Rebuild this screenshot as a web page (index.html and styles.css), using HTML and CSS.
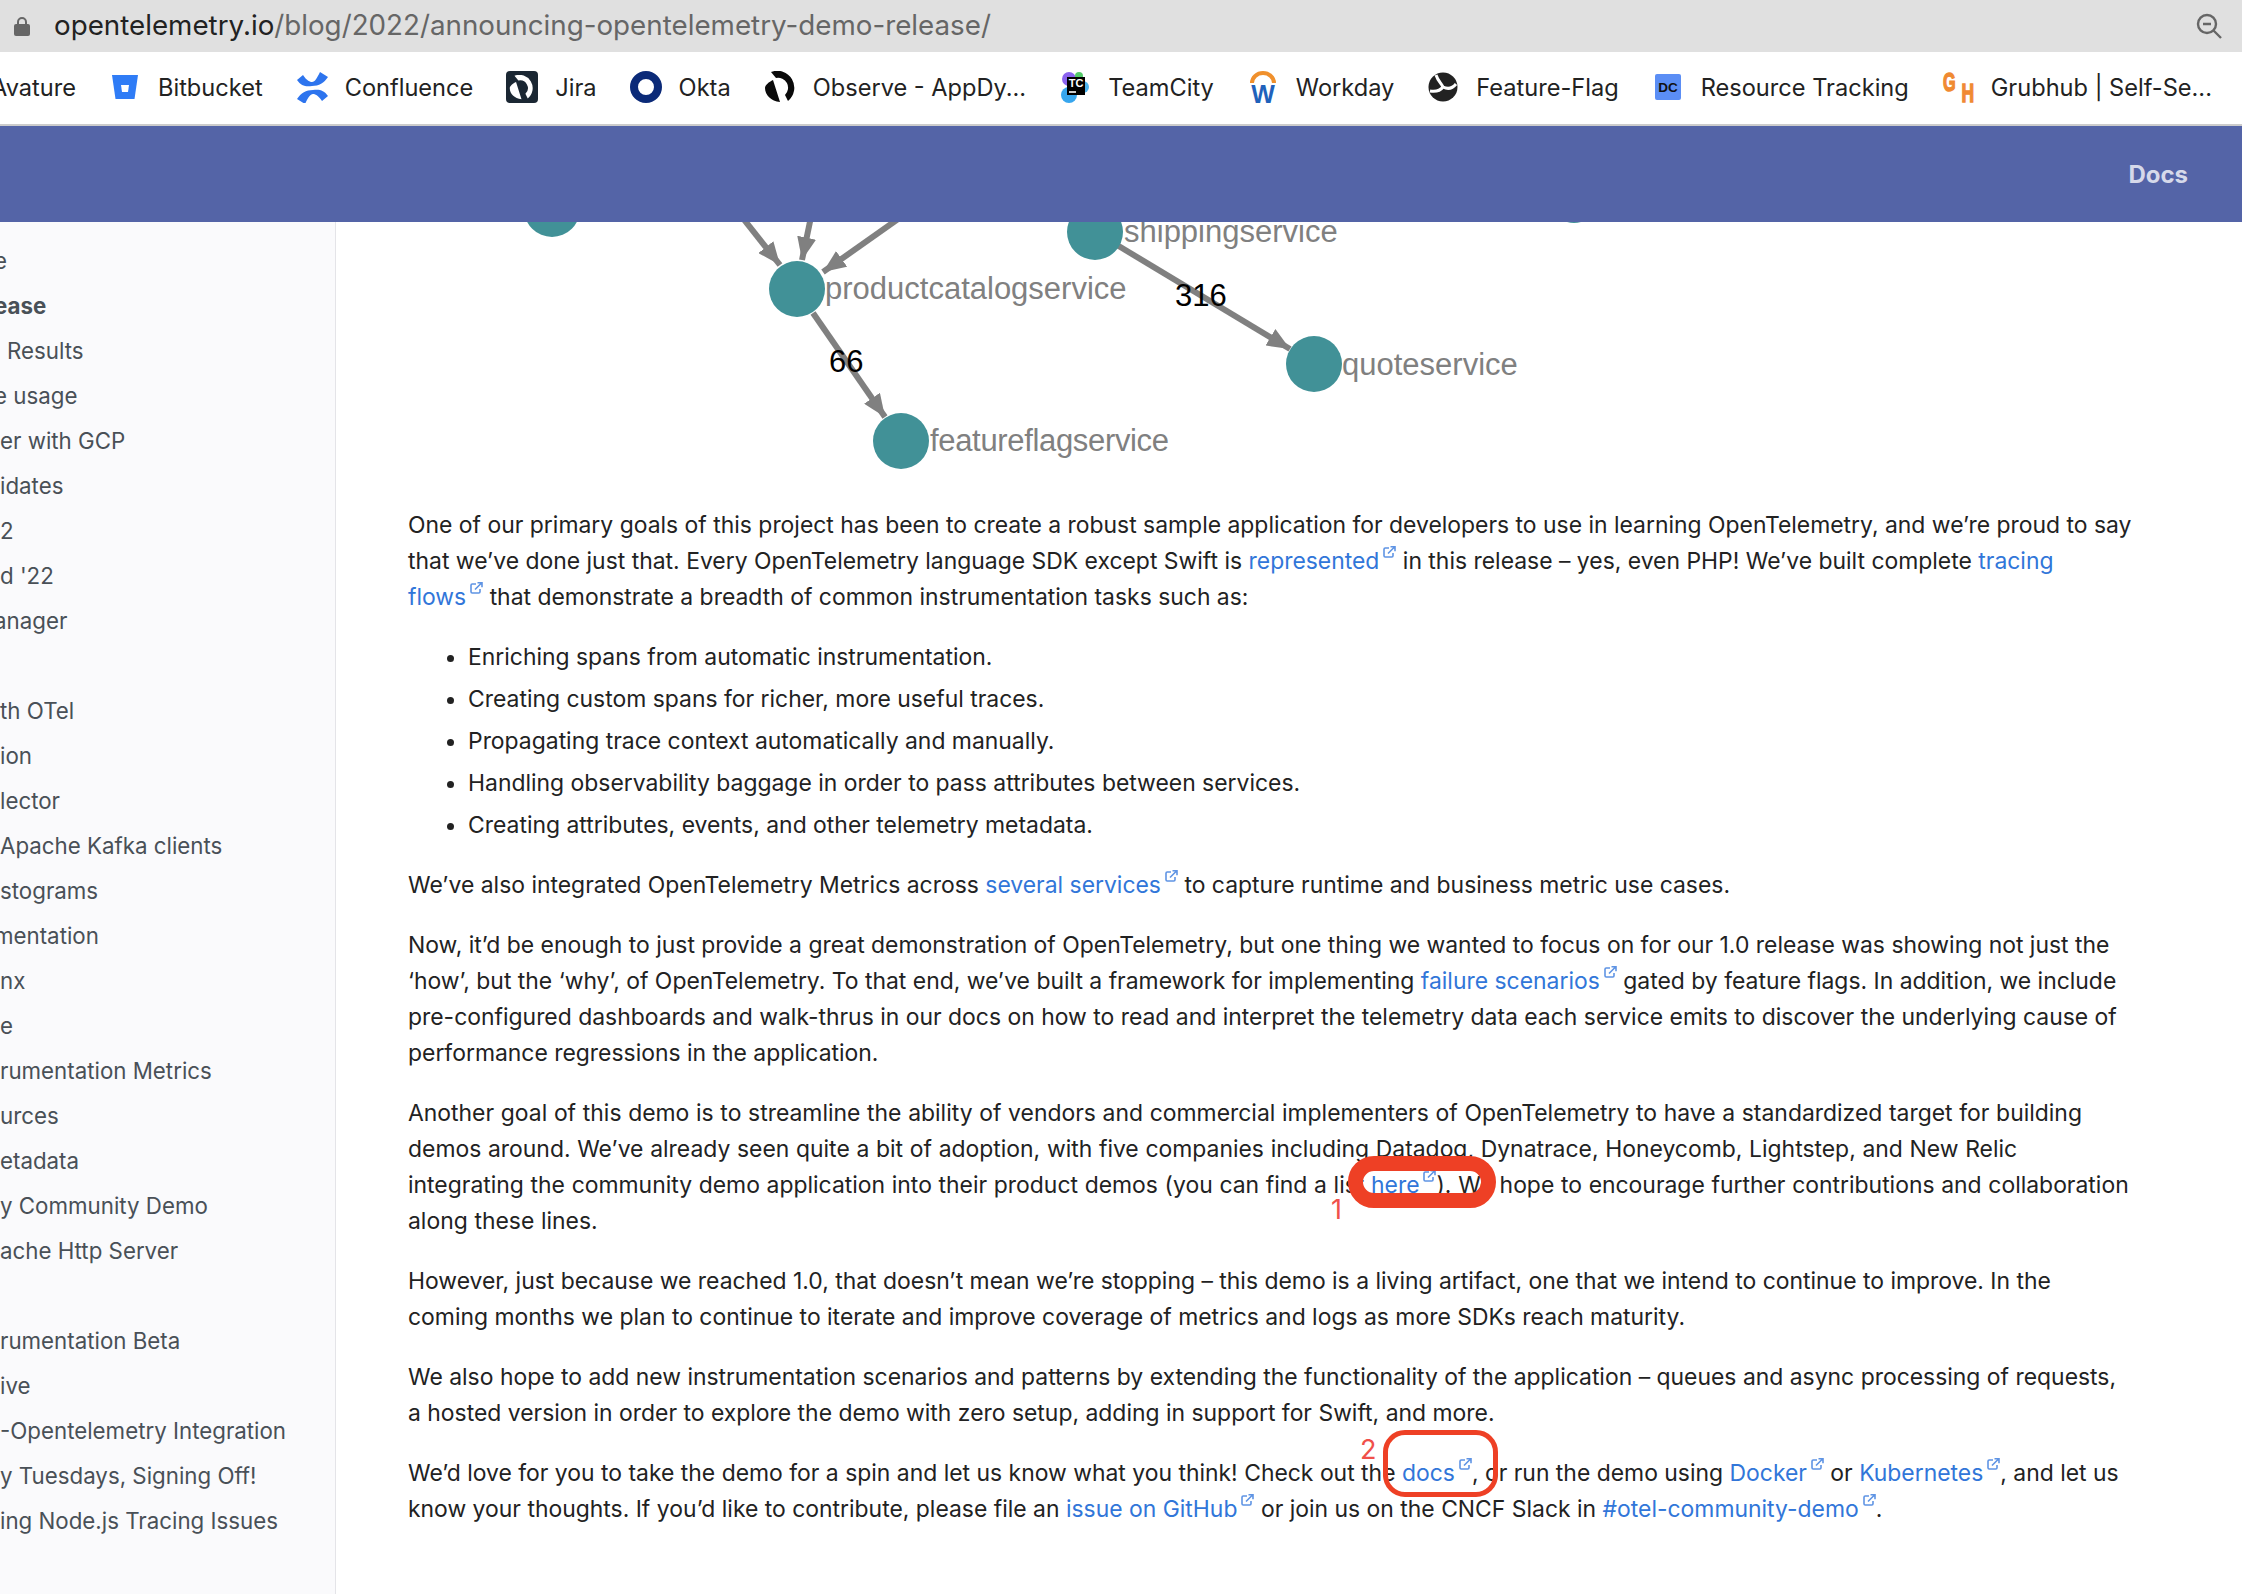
FILE: index.html
```html
<!DOCTYPE html>
<html lang="en">
<head>
  <meta charset="UTF-8" />
  <title>Announcing the OpenTelemetry Demo Release</title>
  <link rel="stylesheet" href="styles.css">
</head>
<body>
  <svg width="0" height="0" class="defs">
    <symbol id="ext" viewBox="0 0 13 12">
      <path d="M6 2H2.2A1.2 1.2 0 0 0 1 3.2v6.6A1.2 1.2 0 0 0 2.2 11h6.6A1.2 1.2 0 0 0 10 9.800V7M5 7.500 11.500 1M7.500 .8H12V5.300" fill="none" stroke="currentColor" stroke-width="1.600"/>
    </symbol>
    <symbol id="swirl" viewBox="0 0 32 32">
      <path d="M7 1A17 17 0 0 1 24 30L21 24A10 10 0 0 0 12 7zM9 9 16 31C7 30 1 24 1 17 1 14 5 11 9 9z"/>
    </symbol>
  </svg>

  <!-- Browser chrome -->
  <div class="url-bar">
    <svg class="lock" viewBox="0 0 16 20"><path d="M4 9V6a4 4 0 0 1 8 0v3" fill="none" stroke="#666" stroke-width="2"/><rect y="8" width="16" height="12" rx="2" fill="#666"/></svg>
    <span class="url"><b>opentelemetry.io</b>/blog/2022/announcing-opentelemetry-demo-release/</span>
    <svg class="zoom-icon" viewBox="0 0 26 26"><circle cx="11" cy="11" r="9" fill="none" stroke="#666" stroke-width="2.400"/><path d="M7 11h8M17.500 17.500 25 25" fill="none" stroke="#666" stroke-width="2.400"/></svg>
  </div>

  <div class="bookmarks">
    <a class="bm first">Avature</a>
    <a class="bm">
      <svg viewBox="-3 -4 32 32"><path d="M0 0h26l-3.500 24H3.500z" fill="#2f7cf6"/><path d="M9 10h8l-1 7h-6z" fill="#fff"/></svg>
      Bitbucket</a>
    <a class="bm">
      <svg viewBox="0 0 32 32"><path id="conf-band" d="M1 9 7 4C11 10 14 11 16 11 19 11 21 7 24 1l8 5C28 12 23 15 16 15 10 16 5 15 1 9z" fill="#2d74ee"/><use href="#conf-band" transform="rotate(180 16.500 17)"/></svg>
      Confluence</a>
    <a class="bm">
      <svg viewBox="0 0 32 32"><rect width="32" height="32" rx="4" fill="#1b2733"/><use href="#swirl" x="3" y="4" width="25" height="25" fill="#fff"/></svg>
      Jira</a>
    <a class="bm">
      <svg viewBox="0 0 32 32"><circle cx="16" cy="16" r="12" fill="none" stroke="#0b2a78" stroke-width="8"/></svg>
      Okta</a>
    <a class="bm">
      <svg viewBox="0 0 32 32"><use href="#swirl" width="32" height="32" fill="#0a0a0a"/></svg>
      Observe - AppDy...</a>
    <a class="bm">
      <svg viewBox="0 0 32 32"><circle cx="10" cy="8" r="7" fill="#8a63ee"/><circle cx="20" cy="5" r="4" fill="#54c96a"/><circle cx="10" cy="24" r="8" fill="#37a6ee"/><circle cx="24" cy="16" r="6" fill="#4db4ee"/><rect x="8" y="6" width="18" height="18" fill="#000"/><text x="17" y="16" class="tc">TC</text><path d="M10 21h7" stroke="#fff" stroke-width="1.600"/></svg>
      TeamCity</a>
    <a class="bm">
      <svg viewBox="-2 0 32 32"><path d="M3 12a11 10 0 0 1 22 0" fill="none" stroke="#f0902c" stroke-width="4"/><text x="14" y="32" class="wd">W</text></svg>
      Workday</a>
    <a class="bm">
      <svg viewBox="-1 -1 32 32"><circle cx="15" cy="15" r="14.500" fill="#222"/><path d="M15 15C13 11 10 9 8 3M15 15C12 19 8 20 2 19M15 15C19 17 24 17 28 12" fill="none" stroke="#fff" stroke-width="3"/></svg>
      Feature-Flag</a>
    <a class="bm">
      <svg viewBox="-3 -3 32 32"><rect width="26" height="26" rx="2" fill="#5b8ef5"/><text x="13" y="18" class="dc">DC</text></svg>
      Resource Tracking</a>
    <a class="bm">
      <svg viewBox="0 0 33 32"><text x="1" y="20" class="gh" textLength="13" lengthAdjust="spacingAndGlyphs">G</text><text x="20" y="31" class="gh" textLength="13" lengthAdjust="spacingAndGlyphs">H</text></svg>
      Grubhub | Self-Se...</a>
  </div>

  <header class="site-nav"><a>Docs</a></header>

  <div class="page">
    <!-- Sidebar, scrolled sideways in the capture -->
    <aside class="sidebar">
      <ul>
        <li class="cut">e</li>
        <li class="active cut">ease</li>
        <li class="step">Results</li>
        <li class="cut">e usage</li>
        <li>er with GCP</li>
        <li>idates</li>
        <li>2</li>
        <li>d '22</li>
        <li class="cut">anager</li>
        <li>&nbsp;</li>
        <li>th OTel</li>
        <li>ion</li>
        <li>lector</li>
        <li>Apache Kafka clients</li>
        <li>stograms</li>
        <li class="cut">mentation</li>
        <li>nx</li>
        <li>e</li>
        <li>rumentation Metrics</li>
        <li>urces</li>
        <li>etadata</li>
        <li>y Community Demo</li>
        <li>ache Http Server</li>
        <li>&nbsp;</li>
        <li>rumentation Beta</li>
        <li>ive</li>
        <li>-Opentelemetry Integration</li>
        <li>y Tuesdays, Signing Off!</li>
        <li>ing Node.js Tracing Issues</li>
      </ul>
    </aside>

    <main class="content">
      <!-- Service graph -->
      <svg class="graph" viewBox="335 222 1400 285" width="1400" height="285">
        <defs>
          <marker id="head" markerWidth="4" markerHeight="3.200" refX="3.800" refY="1.600" orient="auto">
            <path d="M0 0 3.800 1.600 0 3.200z" fill="#808080"/>
          </marker>
        </defs>
        <g class="edges">
          <path d="M737 212 779 265" marker-end="url(#head)"/>
          <path d="M811 212 801 260" marker-end="url(#head)"/>
          <path d="M907 212 822 272" marker-end="url(#head)"/>
          <path d="M1116 245 1289 349" marker-end="url(#head)"/>
          <path d="M812 313 884 417" marker-end="url(#head)"/>
        </g>
        <g class="nodes">
          <circle cx="551" cy="209" r="28"/>
          <circle cx="1573" cy="199" r="24"/>
          <circle cx="1094" cy="232" r="28"/>
          <circle cx="796" cy="289" r="28"/>
          <circle cx="1313" cy="364" r="28"/>
          <circle cx="900" cy="441" r="28"/>
        </g>
        <g class="labels">
          <text x="1123" y="242">shippingservice</text>
          <text x="824" y="299">productcatalogservice</text>
          <text x="1341" y="375">quoteservice</text>
          <text x="929" y="451" textLength="239">featureflagservice</text>
        </g>
        <g class="counts">
          <text x="1174" y="306">316</text>
          <text x="828" y="372">66</text>
        </g>
      </svg>

      <p>One of our primary goals of this project has been to create a robust sample application for developers to use in learning OpenTelemetry, and we’re proud to say that we’ve done just that. Every OpenTelemetry language SDK except Swift is <a>represented<svg class="ext"><use href="#ext"/></svg></a> in this release – yes, even PHP! We’ve built complete <a>tracing <span class="nb">flows<svg class="ext"><use href="#ext"/></svg></span></a> that demonstrate a breadth of common instrumentation tasks such as:</p>
      <ul class="tasks">
        <li>Enriching spans from automatic instrumentation.</li>
        <li>Creating custom spans for richer, more useful traces.</li>
        <li>Propagating trace context automatically and manually.</li>
        <li>Handling observability baggage in order to pass attributes between services.</li>
        <li>Creating attributes, events, and other telemetry metadata.</li>
      </ul>
      <p>We’ve also integrated OpenTelemetry Metrics across <a>several services<svg class="ext"><use href="#ext"/></svg></a> to capture runtime and business metric use cases.</p>
      <p>Now, it’d be enough to just provide a great demonstration of OpenTelemetry, but one thing we wanted to focus on for our 1.0 release was showing not just the ‘how’, but the ‘why’, of OpenTelemetry. To that end, we’ve built a framework for implementing <a>failure scenarios<svg class="ext"><use href="#ext"/></svg></a> gated by feature flags. In addition, we include pre-configured dashboards and walk-thrus in our docs on how to read and interpret the telemetry data each service emits to discover the underlying cause of performance regressions in the application.</p>
      <p class="loose">Another goal of this demo is to streamline the ability of vendors and commercial implementers of OpenTelemetry to have a standardized target for building demos around. We’ve already seen quite a bit of adoption, with five companies including Datadog, Dynatrace, Honeycomb, Lightstep, and New Relic integrating the community demo application into their product demos (you can find a list <a>here<svg class="ext"><use href="#ext"/></svg></a>). We hope to encourage further contributions and collaboration along these lines.</p>
      <p>However, just because we reached 1.0, that doesn’t mean we’re stopping – this demo is a living artifact, one that we intend to continue to improve. In the coming months we plan to continue to iterate and improve coverage of metrics and logs as more SDKs reach maturity.</p>
      <p>We also hope to add new instrumentation scenarios and patterns by extending the functionality of the application – queues and async processing of requests, a hosted version in order to explore the demo with zero setup, adding in support for Swift, and more.</p>
      <p>We’d love for you to take the demo for a spin and let us know what you think! Check out the <a>docs<svg class="ext"><use href="#ext"/></svg></a>, or run the demo using <a>Docker<svg class="ext"><use href="#ext"/></svg></a> or <a>Kubernetes<svg class="ext"><use href="#ext"/></svg></a>, and let us know your thoughts. If you’d like to contribute, please file an <a>issue on GitHub<svg class="ext"><use href="#ext"/></svg></a> or join us on the CNCF Slack in <a>#otel-community-demo<svg class="ext"><use href="#ext"/></svg></a>.</p>

      <!-- Red marks drawn over the screenshot -->
      <div class="mark mark-here"></div>
      <div class="mark mark-docs"></div>
      <span class="mark-num num-1">1</span>
      <span class="mark-num num-2">2</span>
    </main>
  </div>
</body>
</html>
```

FILE: styles.css
```css
* {
  box-sizing: border-box;
}

html, body {
  margin: 0;
  height: 1594px;
  overflow: hidden;
}

body {
  font-family: Inter, "Noto Sans", sans-serif;
  color: #222;
  background-color: white;
}

.defs {
  position: absolute;
}

/* Browser chrome */
.url-bar {
  height: 52px;
  display: flex;
  align-items: center;
  padding: 0 20px 0 14px;
  background-color: #e0e0e0;
}

.lock {
  width: 16px;
  height: 20px;
}

.url {
  margin: 0 0 3px 24px;
  font-size: 27.75px;
  color: #666;
  flex: 1;
}

.url b {
  font-weight: normal;
  color: #222;
}

.zoom-icon {
  width: 26px;
  height: 26px;
}

.bookmarks {
  height: 74px;
  display: flex;
  align-items: center;
  gap: 33px;
  padding-bottom: 2px;
  border-bottom: 2px solid #ccc;
  overflow: hidden;
  white-space: nowrap;
}

.bm {
  display: flex;
  align-items: center;
  gap: 17px;
  font-size: 23.6px;
  flex-shrink: 0;
}

.bm.first {
  margin-left: -9px;
}

.bm svg {
  width: 32px;
  height: 32px;
  flex-shrink: 0;
}

.dc, .tc, .wd {
  font-family: "Liberation Sans", sans-serif;
  font-weight: bold;
  text-anchor: middle;
}

.dc {
  font-size: 13.5px;
  fill: #111;
}

.tc {
  font-size: 11px;
  fill: #fff;
}

.wd {
  font-size: 25px;
  fill: #1f62bb;
}

.gh {
  font: bold 27px "Liberation Sans", sans-serif;
  fill: #f08a32;
  stroke: #f08a32;
  stroke-width: 1.5;
}

.site-nav {
  height: 96px;
  display: flex;
  align-items: center;
  justify-content: flex-end;
  padding: 0 54px 0 0;
  background-color: #5464a7;
}

.site-nav a {
  font-size: 24px;
  font-weight: bold;
  color: #d6d9ea;
}

/* Page */
.page {
  display: flex;
  height: 1372px;
}

.sidebar {
  width: 336px;
  flex-shrink: 0;
  padding-top: 16px;
  background-color: #fafafc;
  border-right: 1px solid #e4e4e8;
  overflow: hidden;
  white-space: nowrap;
}

.sidebar ul {
  margin: 0;
  padding: 0;
  list-style: none;
}

.sidebar li {
  height: 45px;
  line-height: 45px;
  font-size: 22.3px;
  color: #495057;
}

.sidebar .active {
  font-weight: bold;
}

.sidebar .step {
  padding-left: 7px;
}

.sidebar .cut {
  text-indent: -6px;
}

.content {
  position: relative;
  flex: 1;
  padding: 0 0 0 72px;
  font-size: 22.92px;
  line-height: 36px;
}

.graph {
  display: block;
  margin-left: -72px;
  overflow: hidden;
}

.edges path {
  fill: none;
  stroke: #808080;
  stroke-width: 6;
}

.nodes circle {
  fill: #419197;
}

.labels text {
  font: 31px "Liberation Sans", sans-serif;
  fill: #808080;
}

.counts text {
  font: 31px "Liberation Sans", sans-serif;
  fill: #000;
}

.content p {
  width: 1726px;
  margin: 0 0 24px;
}

.content p.loose {
  word-spacing: 0.25px;
}

.content a {
  color: #3176d9;
}

.nb {
  white-space: nowrap;
}

.ext {
  width: 13px;
  height: 12px;
  margin: 0 0 0 4px;
  vertical-align: 11px;
  color: #5f94e4;
}

.tasks {
  margin: 0 0 24px;
  padding-left: 60px;
}

.tasks li {
  margin-bottom: 6px;
}

/* Annotations */
.mark {
  position: absolute;
  border-style: solid;
  border-color: #ee4025;
}

.mark-here {
  left: 1012px;
  top: 934px;
  width: 148px;
  height: 52px;
  border-width: 15px;
  border-radius: 26px;
}

.mark-docs {
  left: 1047px;
  top: 1208px;
  width: 115px;
  height: 67px;
  border-width: 5px;
  border-radius: 22px;
}

.mark-num {
  position: absolute;
  font-size: 27px;
  line-height: 30px;
  color: #f0504a;
}

.num-1 {
  left: 995px;
  top: 973px;
}

.num-2 {
  left: 1024px;
  top: 1213px;
}
```
